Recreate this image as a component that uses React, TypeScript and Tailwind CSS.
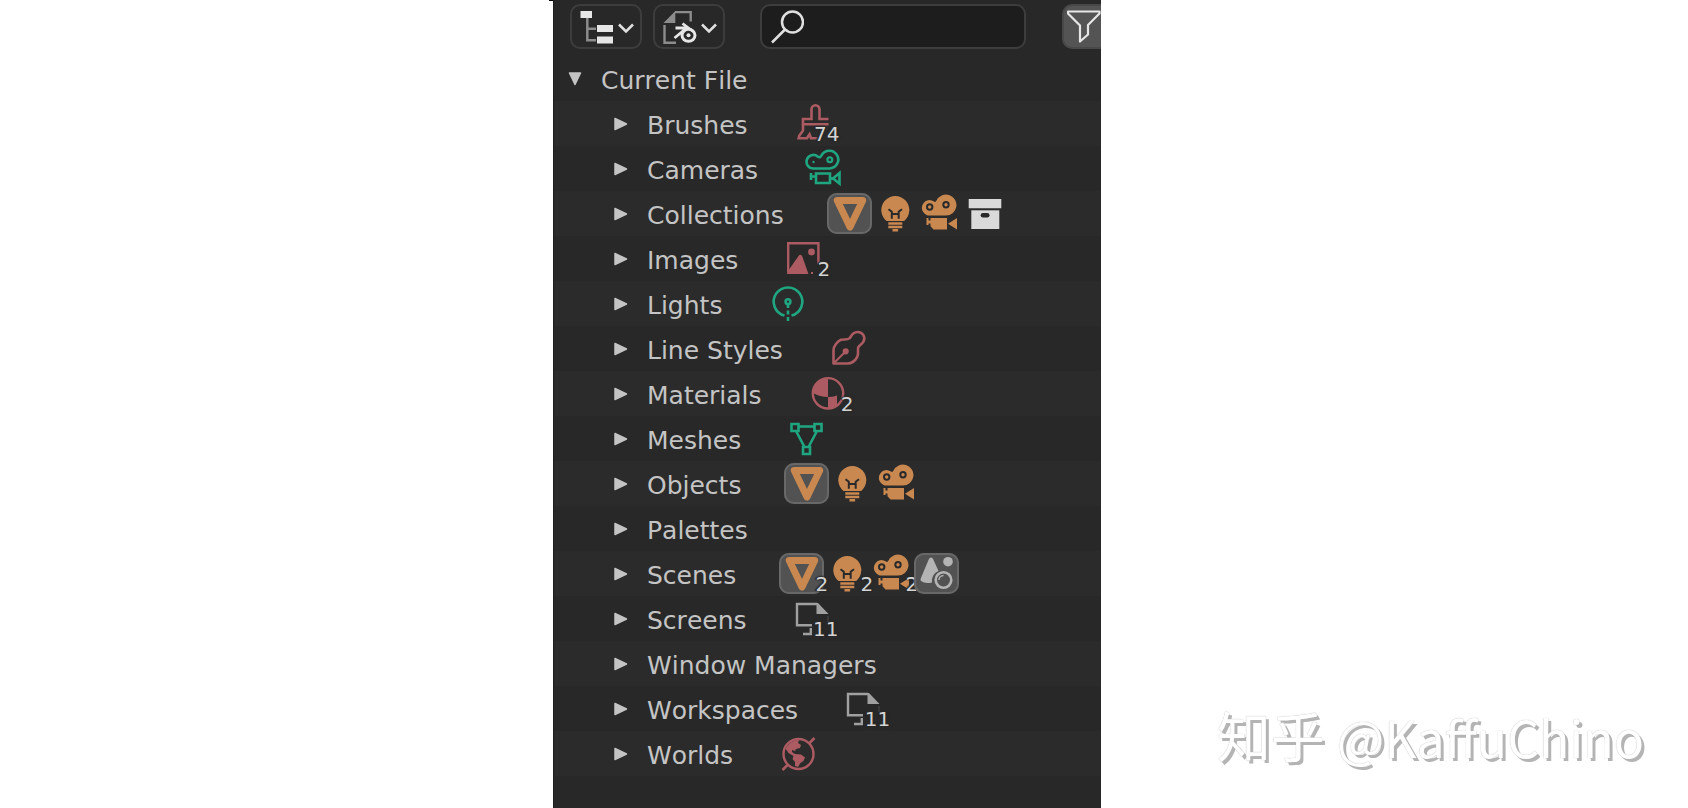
import clsx from 'clsx'
import React, { useState } from 'react'

type IconName =
  | 'brush'
  | 'cameraData'
  | 'meshObject'
  | 'lightObject'
  | 'cameraObject'
  | 'collection'
  | 'image'
  | 'lightData'
  | 'lineStyle'
  | 'material'
  | 'meshData'
  | 'scene'
  | 'screen'
  | 'world'

type Item = { icon: IconName; count?: number; active?: boolean }

const groups: { label: string; items: Item[] }[] = [
  { label: 'Brushes', items: [{ icon: 'brush', count: 74 }] },
  { label: 'Cameras', items: [{ icon: 'cameraData' }] },
  {
    label: 'Collections',
    items: [
      { icon: 'meshObject', active: true },
      { icon: 'lightObject' },
      { icon: 'cameraObject' },
      { icon: 'collection' }
    ]
  },
  { label: 'Images', items: [{ icon: 'image', count: 2 }] },
  { label: 'Lights', items: [{ icon: 'lightData' }] },
  { label: 'Line Styles', items: [{ icon: 'lineStyle' }] },
  { label: 'Materials', items: [{ icon: 'material', count: 2 }] },
  { label: 'Meshes', items: [{ icon: 'meshData' }] },
  {
    label: 'Objects',
    items: [
      { icon: 'meshObject', active: true },
      { icon: 'lightObject' },
      { icon: 'cameraObject' }
    ]
  },
  { label: 'Palettes', items: [] },
  {
    label: 'Scenes',
    items: [
      { icon: 'meshObject', count: 2, active: true },
      { icon: 'lightObject', count: 2 },
      { icon: 'cameraObject', count: 2 },
      { icon: 'scene', active: true }
    ]
  },
  { label: 'Screens', items: [{ icon: 'screen', count: 11 }] },
  { label: 'Window Managers', items: [] },
  { label: 'Workspaces', items: [{ icon: 'screen', count: 11 }] },
  { label: 'Worlds', items: [{ icon: 'world' }] }
]

const ORANGE = '#c98850'
const GREEN = '#1fa681'
const RED = '#ab5b61'
const GRAY = '#a0a0a0'
const DARK = '#2a2a2a'

// All drawn on the 45x41 cell that an icon takes in a row
const icons: Record<IconName, React.ReactNode> = {
  brush: (
    <g fill="none" stroke={RED} strokeWidth="2.6">
      <path d="M37.500 16H28.500V6.300a4 4 0 0 0-8 0V16h-8.500v5.300H37.500" />
      <path d="M12 21.300v6c0 2-4.500 4-4.500 8h8.500l2.500-4 1.500 4H27" />
    </g>
  ),
  cameraData: (
    <g fill="none" stroke={GREEN} strokeWidth="2.6">
      <path d="M12.500 20.500a6.800 6.800 0 1 1 4.200-12c2 1.500 3 .5 4-1.500a8.900 8.900 0 1 1 7.800 13.500z" />
      <circle cx="28.800" cy="11.700" r="2.400" strokeWidth="2.2" />
      <circle cx="12.500" cy="14" r="1.200" fill={GREEN} stroke="none" />
      <path d="M15 25.500h14v9.500H15zM38.500 25v10.500l-6.500-5zM10 25v7M10 28.500h5" />
      <path d="M29 30.500h4" />
    </g>
  ),
  meshObject: (
    <path
      d="M10.300 7.400h25.400L23 34z"
      fill="none"
      stroke={ORANGE}
      strokeWidth="7"
      strokeLinejoin="round"
    />
  ),
  lightObject: (
    <g>
      <path d="M14.500 28a14 14 0 1 1 17.600 0z" fill={ORANGE} />
      <path
        d="M16.300 30.500h14M16.300 34h14M20.500 37.200h5.600"
        stroke={ORANGE}
        strokeWidth="2.400"
      />
      <path
        d="M16.500 16.200l3.300 2.500v7M30 16.200l-3.300 2.500v7M19.800 21h6.900"
        fill="none"
        stroke={DARK}
        strokeWidth="2"
      />
    </g>
  ),
  cameraObject: (
    <g fill={ORANGE}>
      <path d="M12.500 22.500a7.700 7.700 0 1 1 4.500-14c1.200.8 1.800.3 2.500-1a10.500 10.500 0 1 1 9.500 15z" />
      <path d="M13.500 25H30v11.500H16.500l-3-3.300zM40 25v11.500l-9-5.700zM9.500 25h2v2.500H14v3h-2.500V32h-2z" />
      <g fill="none" stroke={DARK} strokeWidth="2">
        <circle cx="12.700" cy="14" r="2.700" />
        <circle cx="29" cy="11.800" r="2.700" />
      </g>
    </g>
  ),
  collection: (
    <g fill="#dadada">
      <path d="M6.700 6h32.600v9.300H6.700z" />
      <path d="M9.300 17.300h28V36h-28z" />
      <rect x="18.700" y="20" width="8.800" height="4.400" rx="2.200" fill={DARK} />
    </g>
  ),
  image: (
    <g fill={RED}>
      <path
        d="M7.200 34V5.200h30.200V26"
        fill="none"
        stroke={RED}
        strokeWidth="2.4"
      />
      <path d="M17.500 18q1.800-2.500 3.600 0L27.500 36H6V34.500z" />
      <circle cx="30.500" cy="14" r="3.400" />
      <path d="M30 34h2v2h-2z" />
    </g>
  ),
  lightData: (
    <g fill="none" stroke={GREEN} strokeWidth="2.6">
      <path d="M19.500 32.600a14.300 14.300 0 1 1 7 0" />
      <circle cx="23" cy="18.700" r="2.400" />
      <path d="M23 21v4M23 27.500v4M23 34v4" />
    </g>
  ),
  lineStyle: (
    <g fill="none" stroke={RED} strokeWidth="2.6" strokeLinejoin="round">
      <path d="M7.500 35.500V22c0-3.500 3.500-8.500 7.500-10.200 3-.8 6 .5 8.500-1.500 2-1.700 2.300-6 8-6.300 5.500-.1 8.300 5.500 6 9.500-1.500 3-4.500 3.500-5.300 6-.8 3 .8 6-1 9.500-2.200 4-5.700 6.500-9.700 6.500z" />
      <path d="M8 35l11-11" strokeWidth="2" />
      <circle cx="19.700" cy="23.300" r="1.800" fill={RED} />
    </g>
  ),
  material: (
    <g>
      <circle
        cx="23"
        cy="20.300"
        r="15.200"
        fill="none"
        stroke={RED}
        strokeWidth="2.4"
      />
      <path
        d="M23 5v19q-8 0-15-4A15 15 0 0 1 23 5zM23 24q5 0 9-1.500V32q-4 3.500-9 3.500z"
        fill={RED}
      />
    </g>
  ),
  meshData: (
    <g fill="none" stroke={GREEN} strokeWidth="2.6">
      <path d="M7.500 6h7v7h-7zM30.500 6h7v7h-7zM19 29h7v7h-7zM14.500 8.500h16M12 13l8.500 16M33 13l-8.500 16" />
    </g>
  ),
  scene: (
    <g fill="#b4b4b4">
      <path d="M17 4.500q1.600 0 2.300 2L24.500 18a10.500 10.500 0 0 0-6.500 11.500Q11 31 7 28q-.8-.8-.3-2.500l8-19Q15.400 4.500 17 4.500z" />
      <circle cx="34" cy="8.700" r="4.800" />
      <circle
        cx="29.500"
        cy="27"
        r="7.800"
        fill="none"
        stroke="#b4b4b4"
        strokeWidth="2.6"
      />
      <path
        d="M25 27a4.500 4.500 0 0 1 4.500-4.500"
        fill="none"
        stroke="#b4b4b4"
        strokeWidth="1.500"
      />
    </g>
  ),
  screen: (
    <g fill="none" stroke={GRAY} strokeWidth="2.4">
      <path d="M27 6H7v21.200h15" />
      <path d="M26.500 5H28l10.500 11H26.500z" fill={GRAY} stroke="none" />
      <path d="M13 36h7.800v-6" />
      <path d="M38 18v6" stroke="#4a4a4a" strokeWidth="1" />
    </g>
  ),
  world: (
    <g>
      <circle
        cx="22.500"
        cy="21"
        r="15"
        fill="none"
        stroke={RED}
        strokeWidth="2.4"
      />
      <path d="M33.500 10l5-5M6.500 37l5-5" stroke={RED} strokeWidth="2.6" />
      <path
        d="M13 11q5-4.500 10-4l-1 3 3 2-1 3-4 1-1 2-3-1v2l3 2 6 .5 4 3-1.500 3.500-3 2-2.500 4-3-1v-4l-2.500-3 1-3-5-3-3-4.500z"
        fill={RED}
      />
    </g>
  )
}

function DisclosureButton({
  label,
  open,
  onClick
}: {
  label: string
  open: boolean
  onClick?: () => void
}) {
  return (
    <button
      type="button"
      aria-label={label}
      aria-expanded={open}
      onClick={onClick}
      className="shrink-0"
    >
      <svg
        viewBox="0 0 14 14"
        className={clsx('h-3.5 w-3.5', open && 'rotate-90')}
      >
        <path
          d="M1 1.500L12.500 7 1 12.500z"
          fill="#c4c4c4"
          stroke="#c4c4c4"
          strokeWidth="1.500"
          strokeLinejoin="round"
        />
      </svg>
    </button>
  )
}

function ItemCell({ icon, count, active }: Item) {
  return (
    <button
      type="button"
      aria-label={icon}
      className={clsx(
        'relative h-[41px] w-[45px] shrink-0 rounded-[10px]',
        active && 'bg-[#525252] inset-ring-2 inset-ring-[#686868]'
      )}
    >
      <svg viewBox="0 0 45 41" className="h-[41px] w-[45px]">
        {icons[icon]}
      </svg>
      {count !== undefined && (
        <span className="absolute -right-1 bottom-0 text-xl leading-5 text-[#d4d4d4] [text-shadow:-2px_0_1px_#2a2a2a,0_-1px_2px_#2a2a2a,1px_1px_2px_#2a2a2a]">
          {count}
        </span>
      )}
    </button>
  )
}

function Chevron() {
  return (
    <svg viewBox="0 0 16 16" className="h-4 w-4" fill="none">
      <path d="M1 4.500l7 7 7-7" stroke="#e0e0e0" strokeWidth="2.500" />
    </svg>
  )
}

const menuButton =
  'flex h-[45px] w-[72px] shrink-0 items-center justify-center gap-1 rounded-[10px] border-2 border-[#3d3d3d] bg-[#282828] pt-0.5 pl-0.5'

function Toolbar() {
  const [search, setSearch] = useState('')

  return (
    <div className="flex h-14 items-start pt-1 pl-4">
      <button type="button" aria-label="Editor type" className={menuButton}>
        <svg viewBox="0 0 34 34" className="h-[34px] w-[34px]">
          <path
            d="M7.300 7v22.300H16M7.300 17.700H16"
            fill="none"
            stroke="#8c8c8c"
            strokeWidth="2.500"
          />
          <path
            d="M.5 0h11.500v7H.5zM17 14H33v7H17zM17 25.500H33v7H17z"
            fill="#e6e6e6"
          />
        </svg>
        <Chevron />
      </button>
      <button
        type="button"
        aria-label="Display mode"
        className={clsx(menuButton, 'ml-[11px]')}
      >
        <svg viewBox="0 0 34 34" className="h-[34px] w-[34px]" fill="none">
          <path d="M.5 12L12.300 0v12z" fill="#8c8c8c" />
          <path
            d="M12 1h15.700v9.500M1.500 14v17.700H13"
            stroke="#8c8c8c"
            strokeWidth="2.400"
          />
          <path
            d="M12.500 17h13M19.500 12.500l10 7.500M23 17.500L11.500 27"
            stroke="#e6e6e6"
            strokeWidth="2.800"
          />
          <ellipse
            cx="25.500"
            cy="24.300"
            rx="6.500"
            ry="6"
            stroke="#e6e6e6"
            strokeWidth="3"
          />
          <circle cx="25.500" cy="24.300" r="2" fill="#e6e6e6" />
        </svg>
        <Chevron />
      </button>
      <label className="ml-[35px] flex h-[45px] min-w-0 flex-1 items-center gap-2 rounded-[10px] border-2 border-[#3d3d3d] bg-[#1d1d1d] pl-2">
        <svg
          viewBox="0 0 34 34"
          className="h-[34px] w-[34px] shrink-0"
          fill="none"
          stroke="#e0e0e0"
          strokeWidth="2.500"
        >
          <circle cx="22.500" cy="12" r="10.500" />
          <path d="M15 19.500L2 32.500" />
        </svg>
        <input
          type="text"
          aria-label="Search"
          value={search}
          onChange={(e) => setSearch(e.target.value)}
          className="min-w-0 flex-1 bg-transparent text-[#c8c8c8] outline-none"
        />
      </label>
      <button
        type="button"
        aria-label="Filter"
        className="ml-9 flex h-[45px] w-[39px] shrink-0 items-center justify-end rounded-l-[10px] border-2 border-r-0 border-[#484848] bg-[#545454]"
      >
        <svg
          viewBox="0 0 34 34"
          className="h-[34px] w-[34px]"
          fill="none"
          stroke="#e6e6e6"
          strokeWidth="2.200"
          strokeLinejoin="round"
        >
          <path d="M1 1.500h31.500v2L21 15v9.500L13 31.500V15.500L1 3.500z" />
        </svg>
      </button>
    </div>
  )
}

export default function App() {
  const [open, setOpen] = useState(true)

  return (
    <div className="grid min-h-screen grid-cols-[553fr_548fr_587fr] bg-white font-['DejaVu_Sans',sans-serif]">
      <div className="flex justify-end">
        <div className="h-px w-1 bg-black" />
      </div>
      <main className="overflow-hidden border-l border-[#1c1c1c] bg-[#282828] text-[25px] leading-8 text-[#c4c4c4] [font-kerning:none]">
        <Toolbar />
        <div className="flex h-[45px] items-center gap-[19px] pl-[14px]">
          <DisclosureButton
            label="Current File"
            open={open}
            onClick={() => setOpen(!open)}
          />
          <span className="pt-[5px]">Current File</span>
        </div>
        {open && (
          <ul>
            {groups.map(({ label, items }) => (
              <li
                key={label}
                className="flex h-[45px] items-center pl-[60px] whitespace-nowrap odd:bg-[#2b2b2b]"
              >
                <DisclosureButton label={label} open={false} />
                <span className="pt-[5px] pl-[19px]">{label}</span>
                <div className="flex pb-px pl-[43px]">
                  {items.map((item) => (
                    <ItemCell key={item.icon} {...item} />
                  ))}
                </div>
              </li>
            ))}
          </ul>
        )}
      </main>
      <div className="flex items-end justify-end pr-11 pb-9">
        <p className="font-['Noto_Sans_CJK_SC',sans-serif] text-[54px] leading-[72px] whitespace-nowrap text-white [text-shadow:3px_3px_0_#b4b4b4,0_0_1px_#a0a0a0]">
          知乎 <span className="text-[50px]">@KaffuChino</span>
        </p>
      </div>
    </div>
  )
}
